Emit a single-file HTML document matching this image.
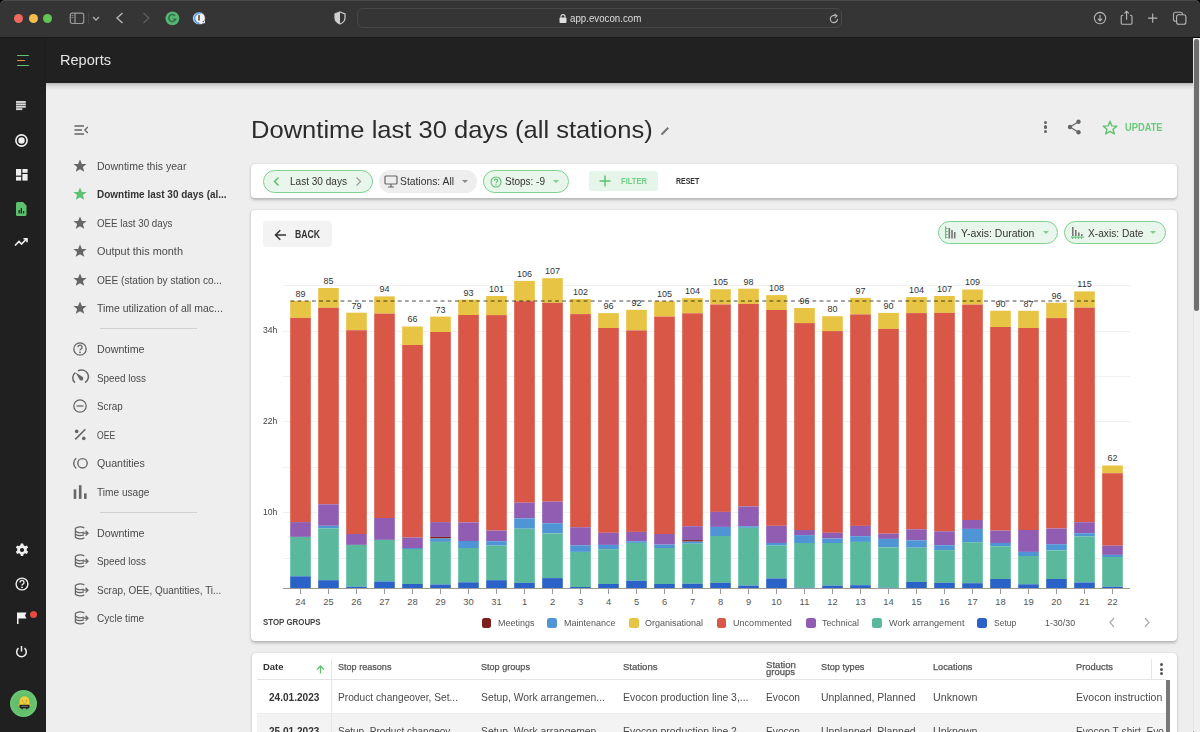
<!DOCTYPE html>
<html><head><meta charset="utf-8"><title>Reports</title>
<style>
html,body{margin:0;padding:0;}
body{width:1200px;height:732px;overflow:hidden;position:relative;background:#000;font-family:"Liberation Sans",sans-serif;}
.t{position:absolute;white-space:nowrap;}
.r{position:absolute;}
.s{position:absolute;overflow:visible;}
</style></head><body>

<div class="r" style="left:0px;top:0px;width:1200px;height:37px;background:#353535;border-radius:5px 5px 0 0;box-shadow:inset 0 1px 0 #4a4a4a;"></div>
<div class="r" style="left:14.0px;top:14px;width:9px;height:9px;border-radius:50%;background:#ee6a5f;"></div>
<div class="r" style="left:28.5px;top:14px;width:9px;height:9px;border-radius:50%;background:#f5bf4f;"></div>
<div class="r" style="left:43.0px;top:14px;width:9px;height:9px;border-radius:50%;background:#61c454;"></div>
<svg class="s" style="left:69px;top:12px;" width="16" height="12" viewBox="0 0 16 12"><rect x="1.3" y="1.1" width="13.4" height="10.4" rx="2" fill="none" stroke="#9a9a9a" stroke-width="1.2"/><line x1="6" y1="1" x2="6" y2="11" stroke="#9a9a9a" stroke-width="1.2"/><line x1="2.5" y1="3.5" x2="4.5" y2="3.5" stroke="#9a9a9a" stroke-width=".8"/><line x1="2.5" y1="5.5" x2="4.5" y2="5.5" stroke="#9a9a9a" stroke-width=".8"/></svg>
<div class="r" style="left:88px;top:13px;width:1px;height:11px;background:#444;"></div>
<svg class="s" style="left:92px;top:16px;" width="8" height="5" viewBox="0 0 8 5"><path d="M1 1 L4 4 L7 1" fill="none" stroke="#b0b0b0" stroke-width="1.3"/></svg>
<svg class="s" style="left:115px;top:12px;" width="9" height="12" viewBox="0 0 9 12"><path d="M7.5 1 L2 6 L7.5 11" fill="none" stroke="#b5b5b5" stroke-width="1.4"/></svg>
<svg class="s" style="left:141.5px;top:12px;" width="9" height="12" viewBox="0 0 9 12"><path d="M1.5 1 L6.8 6 L1.5 11" fill="none" stroke="#5e5e5e" stroke-width="1.3"/></svg>
<svg class="s" style="left:165px;top:11px;" width="15" height="15" viewBox="0 0 15 15"><circle cx="7.4" cy="7.3" r="6.9" fill="#55b673"/><path d="M10.1 4.9 A3.5 3.5 0 1 0 10.6 8.3 L8.2 8.3" fill="none" stroke="#3a6e4a" stroke-width="1.5"/></svg>
<svg class="s" style="left:191px;top:10px;" width="18" height="18" viewBox="0 0 18 18"><circle cx="8" cy="8.3" r="6.3" fill="#f4f4f4" stroke="#222" stroke-width=".6"/><path d="M10.5 3.3 A5.2 5.2 0 1 0 8.5 13.4" fill="none" stroke="#5a9ff0" stroke-width="1.6"/><rect x="7" y="4.7" width="2" height="6" rx=".8" fill="#6e6e6e"/><path d="M9.5 11 L12.3 9.6 L14 11.2 L14 13.2 L11 13.4 L10 14.6 Z" fill="#f0f0f0"/><path d="M11.2 11.8 L12.8 10.8 L13.2 12.6 Z" fill="#555"/></svg>
<svg class="s" style="left:334px;top:11px;" width="12" height="14" viewBox="0 0 12 14"><path d="M6 1 L11 3 L11 7 C11 10 8.5 12 6 13 C3.5 12 1 10 1 7 L1 3 Z" fill="none" stroke="#cfcfcf" stroke-width="1.2"/><path d="M6 1 L6 13 C3.5 12 1 10 1 7 L1 3 Z" fill="#cfcfcf"/></svg>
<div class="r" style="left:357px;top:8px;width:485px;height:20px;background:#353535;border:1px solid #484848;border-radius:6px;box-sizing:border-box;"></div>
<svg class="s" style="left:559px;top:14px;" width="8" height="9" viewBox="0 0 8 9"><rect x="0.5" y="3.5" width="7" height="5.5" rx="1" fill="#e0e0e0"/><path d="M2 3.8 V2.6 A2 2 0 0 1 6 2.6 V3.8" fill="none" stroke="#e0e0e0" stroke-width="1.1"/></svg>
<div class="t" style="left:570.00px;top:13.98px;font-size:10.3px;line-height:10.3px;color:#dedede;transform:scaleX(0.9434);transform-origin:0 0;">app.evocon.com</div>
<svg class="s" style="left:828px;top:13px;" width="12" height="12" viewBox="0 0 12 12"><path d="M9.5 6 A3.6 3.6 0 1 1 7.5 2.8" fill="none" stroke="#bbb" stroke-width="1.1"/><path d="M6.5 1 L9 2.8 L6.8 4.8" fill="none" stroke="#bbb" stroke-width="1.1"/></svg>
<svg class="s" style="left:1092px;top:10px;" width="16" height="16" viewBox="0 0 16 16"><circle cx="8" cy="8.1" r="5.7" fill="none" stroke="#b8b8b8" stroke-width="1.1"/><path d="M8 5 V10.8 M5.8 8.7 L8 10.9 L10.2 8.7" fill="none" stroke="#b8b8b8" stroke-width="1.1"/></svg>
<svg class="s" style="left:1119px;top:9px;" width="16" height="17" viewBox="0 0 16 17"><path d="M4.3 6.3 H3.6 A1.4 1.4 0 0 0 2.2 7.7 V13.9 A1.4 1.4 0 0 0 3.6 15.3 H11.6 A1.4 1.4 0 0 0 13 13.9 V7.7 A1.4 1.4 0 0 0 11.6 6.3 H10.9" fill="none" stroke="#b8b8b8" stroke-width="1.1"/><path d="M7.6 10.7 V2.3 M5.4 4.4 L7.6 2.2 L9.8 4.4" fill="none" stroke="#b8b8b8" stroke-width="1.1"/></svg>
<svg class="s" style="left:1146px;top:11px;" width="14" height="14" viewBox="0 0 14 14"><path d="M6.7 2.5 V11.7 M2.1 7.1 H11.3" stroke="#b8b8b8" stroke-width="1.1"/></svg>
<svg class="s" style="left:1172px;top:11px;" width="16" height="16" viewBox="0 0 16 16"><rect x="1.5" y="1.2" width="9" height="9" rx="2" fill="none" stroke="#b0b0b0" stroke-width="1.1"/><rect x="4.6" y="3.8" width="9.3" height="9.4" rx="2" fill="#353535" stroke="#b8b8b8" stroke-width="1.1"/></svg>
<div class="r" style="left:0px;top:37px;width:46px;height:695px;background:#202020;"></div>
<div class="r" style="left:46px;top:37px;width:1147px;height:46px;background:#212121;"></div>
<div class="r" style="left:0px;top:37px;width:1193px;height:1px;background:#1a1a1a;"></div>
<div class="r" style="left:45px;top:38px;width:1px;height:45px;background:#1d1d1d;"></div>
<div class="r" style="left:46px;top:83px;width:1147px;height:649px;background:#eeeeee;"></div>
<div class="r" style="left:46px;top:83px;width:1147px;height:7px;background:linear-gradient(rgba(0,0,0,.22),rgba(0,0,0,.08) 45%,rgba(0,0,0,0));"></div>
<div class="r" style="left:1193px;top:38px;width:7px;height:694px;background:#efefef;box-shadow:inset 1px 0 0 #e2e2e2;"></div>
<div class="r" style="left:1194px;top:38.5px;width:5px;height:272.5px;background:#6e6e6e;border-radius:2.5px;"></div>
<div class="r" style="left:17px;top:54.8px;width:11.5px;height:1.6px;background:#5cc26f;border-radius:1px;"></div>
<div class="r" style="left:17px;top:59.7px;width:7.8px;height:1.6px;background:#e8913c;border-radius:1px;"></div>
<div class="r" style="left:17px;top:64.7px;width:11.5px;height:1.6px;background:#5cc26f;border-radius:1px;"></div>
<div class="t" style="left:60.00px;top:52.28px;font-size:15.5px;line-height:15.5px;color:#e6e6e6;transform:scaleX(0.9397);transform-origin:0 0;">Reports</div>
<svg class="s" style="left:16.4px;top:101px;" width="10" height="9" viewBox="0 0 10 9"><rect x="0" y="0" width="9.8" height="1.9" fill="#d8d8d8"/><rect x="0" y="2.4" width="9.8" height="1.9" fill="#d8d8d8"/><rect x="0" y="4.8" width="9.8" height="1.9" fill="#d8d8d8"/><rect x="0" y="7.2" width="6.3" height="1.9" fill="#d8d8d8"/></svg>
<svg class="s" style="left:14px;top:133px;" width="15" height="15" viewBox="0 0 15 15"><circle cx="7.5" cy="7.5" r="5.6" fill="none" stroke="#f0f0f0" stroke-width="1.6"/><circle cx="7.5" cy="7.5" r="3.2" fill="#f0f0f0"/></svg>
<svg class="s" style="left:15.5px;top:168.5px;" width="12" height="12" viewBox="0 0 12 12"><rect x="0" y="0" width="5.2" height="6.6" fill="#efefef"/><rect x="6.4" y="0" width="5.2" height="3.8" fill="#efefef"/><rect x="0" y="7.8" width="5.2" height="3.8" fill="#efefef"/><rect x="6.4" y="5" width="5.2" height="6.6" fill="#efefef"/></svg>
<svg class="s" style="left:16px;top:202px;" width="11" height="14" viewBox="0 0 11 14"><path d="M1.5 0 H7 L10.5 3.5 V12.5 A1.5 1.5 0 0 1 9 14 H1.5 A1.5 1.5 0 0 1 0 12.5 V1.5 A1.5 1.5 0 0 1 1.5 0 Z" fill="#5cc26f"/><rect x="2.5" y="8" width="1.3" height="3.5" fill="#1f1f1f"/><rect x="4.7" y="6" width="1.3" height="5.5" fill="#1f1f1f"/><rect x="6.9" y="9" width="1.3" height="2.5" fill="#1f1f1f"/></svg>
<svg class="s" style="left:14px;top:237px;" width="15" height="10" viewBox="0 0 15 10"><path d="M1 8.5 L5 4.5 L7.5 7 L12.5 2 M9.5 1.8 H13 V5.3" fill="none" stroke="#efefef" stroke-width="1.6"/></svg>
<svg class="s" style="left:14.5px;top:542.5px;" width="14" height="14" viewBox="0 0 14 14"><g transform="translate(7 7)"><path d="M-1.2 -6.5 h2.4 l.4 1.8 l1.6 .9 l1.7 -.7 l1.2 2.1 l-1.4 1.2 v1.8 l1.4 1.2 l-1.2 2.1 l-1.7 -.7 l-1.6 .9 l-.4 1.8 h-2.4 l-.4 -1.8 l-1.6 -.9 l-1.7 .7 l-1.2 -2.1 l1.4 -1.2 v-1.8 l-1.4 -1.2 l1.2 -2.1 l1.7 .7 l1.6 -.9 z" fill="#f0f0f0"/><circle r="2.1" fill="#1f1f1f"/></g></svg>
<svg class="s" style="left:14.5px;top:577px;" width="14" height="14" viewBox="0 0 14 14"><circle cx="7" cy="7" r="5.9" fill="none" stroke="#f0f0f0" stroke-width="1.4"/><path d="M5 5.4 A2 2 0 1 1 7.6 7.3 C7.1 7.6 7 8 7 8.6" fill="none" stroke="#f0f0f0" stroke-width="1.4"/><circle cx="7" cy="10.3" r=".9" fill="#f0f0f0"/></svg>
<svg class="s" style="left:16px;top:611px;" width="12" height="14" viewBox="0 0 12 14"><path d="M1 1.5 H10.5 L9 4.5 L10.5 7.5 H2.5 V13 H1 Z" fill="#f2f2f2"/></svg>
<div class="r" style="left:29.5px;top:610.5px;width:7px;height:7px;border-radius:50%;background:#e5493f;"></div>
<svg class="s" style="left:15px;top:645px;" width="13" height="13" viewBox="0 0 13 13"><path d="M6.5 1 V6.5" stroke="#f0f0f0" stroke-width="1.5"/><path d="M3.5 3.2 A4.8 4.8 0 1 0 9.5 3.2" fill="none" stroke="#f0f0f0" stroke-width="1.5"/></svg>
<div class="r" style="left:10px;top:690px;width:27px;height:27px;border-radius:50%;background:radial-gradient(circle,#5fb768 0,#66c26f 60%,#72d888 85%,#5aa866 100%);filter:blur(.7px);"></div>
<svg class="s" style="left:13.5px;top:693px;" width="21" height="21" viewBox="0 0 21 21"><path d="M5.6 10.5 V8.2 A4.9 4.9 0 0 1 15.4 8.2 V10.5 Z" fill="#f0cf3e"/><rect x="5.6" y="9.5" width="9.8" height="2.5" fill="#f0cf3e"/><rect x="5.6" y="11.7" width="9.8" height="3.6" rx=".8" fill="#222"/><rect x="7.2" y="12.9" width="6.6" height=".9" fill="#777"/><rect x="7.4" y="15" width="1.6" height="1.2" fill="#222"/><rect x="12" y="15" width="1.6" height="1.2" fill="#222"/><circle cx="8.4" cy="7.6" r=".6" fill="#a88a20"/><circle cx="12.6" cy="7.6" r=".6" fill="#a88a20"/><path d="M8.6 9.3 L10.5 10.4 L12.4 9.3" fill="none" stroke="#a88a20" stroke-width=".6"/><circle cx="4.4" cy="12.2" r=".8" fill="#d8c040"/><circle cx="16.6" cy="12.2" r=".8" fill="#d8c040"/></svg>
<svg class="s" style="left:74px;top:125px;" width="15" height="10" viewBox="0 0 15 10"><path d="M0.5 1 H10 M0.5 5 H8 M0.5 9 H10" stroke="#666" stroke-width="1.3"/><path d="M13.8 2 L10.8 5 L13.8 8" fill="none" stroke="#666" stroke-width="1.3"/></svg>
<svg class="s" style="left:73px;top:158.5px;" width="14" height="13" viewBox="0 0 14 13"><path d="M7 0.4 L8.9 5 L13.6 5.1 L9.9 8.1 L11.2 12.8 L7 10.2 L2.8 12.8 L4.1 8.1 L0.4 5.1 L5.1 5 Z" fill="#666"/></svg>
<div class="t" style="left:97.40px;top:160.53px;font-size:10.6px;line-height:10.6px;color:#4a4a4a;transform:scaleX(0.9930);transform-origin:0 0;">Downtime this year</div>
<svg class="s" style="left:73px;top:187.0px;" width="14" height="13" viewBox="0 0 14 13"><path d="M7 0.4 L8.9 5 L13.6 5.1 L9.9 8.1 L11.2 12.8 L7 10.2 L2.8 12.8 L4.1 8.1 L0.4 5.1 L5.1 5 Z" fill="#5cc26f"/></svg>
<div class="t" style="left:97.40px;top:189.03px;font-size:10.6px;line-height:10.6px;color:#333;font-weight:700;transform:scaleX(0.9409);transform-origin:0 0;">Downtime last 30 days (al...</div>
<svg class="s" style="left:73px;top:215.5px;" width="14" height="13" viewBox="0 0 14 13"><path d="M7 0.4 L8.9 5 L13.6 5.1 L9.9 8.1 L11.2 12.8 L7 10.2 L2.8 12.8 L4.1 8.1 L0.4 5.1 L5.1 5 Z" fill="#666"/></svg>
<div class="t" style="left:97.40px;top:217.53px;font-size:10.6px;line-height:10.6px;color:#4a4a4a;transform:scaleX(0.9219);transform-origin:0 0;">OEE last 30 days</div>
<svg class="s" style="left:73px;top:244.0px;" width="14" height="13" viewBox="0 0 14 13"><path d="M7 0.4 L8.9 5 L13.6 5.1 L9.9 8.1 L11.2 12.8 L7 10.2 L2.8 12.8 L4.1 8.1 L0.4 5.1 L5.1 5 Z" fill="#666"/></svg>
<div class="t" style="left:97.40px;top:246.03px;font-size:10.6px;line-height:10.6px;color:#4a4a4a;transform:scaleX(1.0279);transform-origin:0 0;">Output this month</div>
<svg class="s" style="left:73px;top:272.6px;" width="14" height="13" viewBox="0 0 14 13"><path d="M7 0.4 L8.9 5 L13.6 5.1 L9.9 8.1 L11.2 12.8 L7 10.2 L2.8 12.8 L4.1 8.1 L0.4 5.1 L5.1 5 Z" fill="#666"/></svg>
<div class="t" style="left:97.40px;top:274.63px;font-size:10.6px;line-height:10.6px;color:#4a4a4a;transform:scaleX(0.9514);transform-origin:0 0;">OEE (station by station co...</div>
<svg class="s" style="left:73px;top:301.0px;" width="14" height="13" viewBox="0 0 14 13"><path d="M7 0.4 L8.9 5 L13.6 5.1 L9.9 8.1 L11.2 12.8 L7 10.2 L2.8 12.8 L4.1 8.1 L0.4 5.1 L5.1 5 Z" fill="#666"/></svg>
<div class="t" style="left:97.40px;top:303.03px;font-size:10.6px;line-height:10.6px;color:#4a4a4a;transform:scaleX(0.9879);transform-origin:0 0;">Time utilization of all mac...</div>
<div class="r" style="left:100px;top:328px;width:97px;height:1px;background:#cfcfcf;"></div>
<svg class="s" style="left:71.7px;top:340.70000000000005px;" width="16" height="16" viewBox="0 0 16 16"><circle cx="8" cy="8" r="6.2" fill="none" stroke="#666" stroke-width="1.3"/><path d="M6 6.3 A2.05 2.05 0 1 1 8.7 8.2 C8.2 8.5 8 8.9 8 9.6" fill="none" stroke="#666" stroke-width="1.3"/><circle cx="8" cy="11.3" r=".85" fill="#666"/></svg>
<div class="t" style="left:97.40px;top:344.13px;font-size:10.6px;line-height:10.6px;color:#4a4a4a;transform:scaleX(1.0101);transform-origin:0 0;">Downtime</div>
<svg class="s" style="left:71.7px;top:369.1px;" width="16" height="16" viewBox="0 0 16 16"><path d="M2.9 13.6 A6.4 6.4 0 0 1 3.4 3.6 M6 1.9 A6.4 6.4 0 0 1 13.1 13.6" fill="none" stroke="#666" stroke-width="1.5"/><path d="M3.6 3.4 L9.9 7.6 A2 2 0 1 1 7.4 10.2 Z" fill="#666"/></svg>
<div class="t" style="left:97.40px;top:372.53px;font-size:10.6px;line-height:10.6px;color:#4a4a4a;transform:scaleX(0.9343);transform-origin:0 0;">Speed loss</div>
<svg class="s" style="left:71.7px;top:397.8px;" width="16" height="16" viewBox="0 0 16 16"><circle cx="8" cy="8" r="6.2" fill="none" stroke="#666" stroke-width="1.3"/><path d="M4.6 8 H11.4" stroke="#666" stroke-width="1.3"/></svg>
<div class="t" style="left:97.40px;top:401.23px;font-size:10.6px;line-height:10.6px;color:#4a4a4a;transform:scaleX(0.9245);transform-origin:0 0;">Scrap</div>
<svg class="s" style="left:71.7px;top:426.3px;" width="16" height="16" viewBox="0 0 16 16"><circle cx="4.7" cy="5.4" r="1.8" fill="#666"/><circle cx="11.8" cy="12.4" r="1.8" fill="#666"/><path d="M3.2 13.4 L13.4 3.3" stroke="#666" stroke-width="1.6"/></svg>
<div class="t" style="left:97.40px;top:429.73px;font-size:10.6px;line-height:10.6px;color:#4a4a4a;transform:scaleX(0.8086);transform-origin:0 0;">OEE</div>
<svg class="s" style="left:71.7px;top:454.8px;" width="16" height="16" viewBox="0 0 16 16"><circle cx="10.5" cy="8.3" r="4.7" fill="none" stroke="#666" stroke-width="1.4"/><path d="M4.2 3.2 A6.4 6.4 0 0 0 4.2 13.4" fill="none" stroke="#666" stroke-width="1.4"/></svg>
<div class="t" style="left:97.40px;top:458.23px;font-size:10.6px;line-height:10.6px;color:#4a4a4a;transform:scaleX(1.0016);transform-origin:0 0;">Quantities</div>
<svg class="s" style="left:71.7px;top:483.3px;" width="16" height="16" viewBox="0 0 16 16"><rect x="1.7" y="6.4" width="2.6" height="9.5" fill="#666"/><rect x="6.9" y="2.2" width="2.6" height="13.7" fill="#666"/><rect x="12" y="10.4" width="2.6" height="5.5" fill="#666"/></svg>
<div class="t" style="left:97.40px;top:486.73px;font-size:10.6px;line-height:10.6px;color:#4a4a4a;transform:scaleX(0.9548);transform-origin:0 0;">Time usage</div>
<div class="r" style="left:100px;top:512px;width:97px;height:1px;background:#cfcfcf;"></div>
<svg class="s" style="left:74px;top:525.6px;" width="16" height="14" viewBox="0 0 16 14"><path d="M10.3 1.9 C8.3 0.4 3.5 0.4 1.4 2.4 V11.2 C3.5 13.3 8.3 13.3 10.3 11.8" fill="none" stroke="#666" stroke-width="1.25"/><path d="M1.6 5.3 C3.5 6.8 7.5 6.9 10 6 M1.6 8.2 C3.5 9.7 7.5 9.8 10 8.9" fill="none" stroke="#666" stroke-width="1.2"/><path d="M8.3 7.2 H13.8 M11.6 4.8 L14 7.2 L11.6 9.6" fill="none" stroke="#666" stroke-width="1.25"/></svg>
<div class="t" style="left:97.40px;top:527.63px;font-size:10.6px;line-height:10.6px;color:#4a4a4a;transform:scaleX(1.0101);transform-origin:0 0;">Downtime</div>
<svg class="s" style="left:74px;top:554.1px;" width="16" height="14" viewBox="0 0 16 14"><path d="M10.3 1.9 C8.3 0.4 3.5 0.4 1.4 2.4 V11.2 C3.5 13.3 8.3 13.3 10.3 11.8" fill="none" stroke="#666" stroke-width="1.25"/><path d="M1.6 5.3 C3.5 6.8 7.5 6.9 10 6 M1.6 8.2 C3.5 9.7 7.5 9.8 10 8.9" fill="none" stroke="#666" stroke-width="1.2"/><path d="M8.3 7.2 H13.8 M11.6 4.8 L14 7.2 L11.6 9.6" fill="none" stroke="#666" stroke-width="1.25"/></svg>
<div class="t" style="left:97.40px;top:556.13px;font-size:10.6px;line-height:10.6px;color:#4a4a4a;transform:scaleX(0.9343);transform-origin:0 0;">Speed loss</div>
<svg class="s" style="left:74px;top:582.7px;" width="16" height="14" viewBox="0 0 16 14"><path d="M10.3 1.9 C8.3 0.4 3.5 0.4 1.4 2.4 V11.2 C3.5 13.3 8.3 13.3 10.3 11.8" fill="none" stroke="#666" stroke-width="1.25"/><path d="M1.6 5.3 C3.5 6.8 7.5 6.9 10 6 M1.6 8.2 C3.5 9.7 7.5 9.8 10 8.9" fill="none" stroke="#666" stroke-width="1.2"/><path d="M8.3 7.2 H13.8 M11.6 4.8 L14 7.2 L11.6 9.6" fill="none" stroke="#666" stroke-width="1.25"/></svg>
<div class="t" style="left:97.40px;top:584.73px;font-size:10.6px;line-height:10.6px;color:#4a4a4a;transform:scaleX(0.9385);transform-origin:0 0;">Scrap, OEE, Quantities, Ti...</div>
<svg class="s" style="left:74px;top:611.2px;" width="16" height="14" viewBox="0 0 16 14"><path d="M10.3 1.9 C8.3 0.4 3.5 0.4 1.4 2.4 V11.2 C3.5 13.3 8.3 13.3 10.3 11.8" fill="none" stroke="#666" stroke-width="1.25"/><path d="M1.6 5.3 C3.5 6.8 7.5 6.9 10 6 M1.6 8.2 C3.5 9.7 7.5 9.8 10 8.9" fill="none" stroke="#666" stroke-width="1.2"/><path d="M8.3 7.2 H13.8 M11.6 4.8 L14 7.2 L11.6 9.6" fill="none" stroke="#666" stroke-width="1.25"/></svg>
<div class="t" style="left:97.40px;top:613.23px;font-size:10.6px;line-height:10.6px;color:#4a4a4a;transform:scaleX(0.9540);transform-origin:0 0;">Cycle time</div>
<div class="t" style="left:251.10px;top:117.78px;font-size:24.6px;line-height:24.6px;color:#2b2b2b;transform:scaleX(1.0384);transform-origin:0 0;">Downtime last 30 days (all stations)</div>
<svg class="s" style="left:660px;top:126px;" width="10" height="10" viewBox="0 0 10 10"><path d="M1 9 L1.3 7.2 L7.5 1 L9 2.5 L2.8 8.7 Z" fill="#777"/></svg>
<div class="r" style="left:1044.0px;top:121.0px;width:3.2px;height:3.2px;border-radius:50%;background:#666;"></div>
<div class="r" style="left:1044.0px;top:125.4px;width:3.2px;height:3.2px;border-radius:50%;background:#666;"></div>
<div class="r" style="left:1044.0px;top:129.70000000000002px;width:3.2px;height:3.2px;border-radius:50%;background:#666;"></div>
<svg class="s" style="left:1067px;top:119px;" width="15" height="16" viewBox="0 0 15 16"><circle cx="11.5" cy="2.8" r="2.2" fill="#666"/><circle cx="3" cy="8" r="2.2" fill="#666"/><circle cx="11.5" cy="13.2" r="2.2" fill="#666"/><path d="M11.5 2.8 L3 8 L11.5 13.2" fill="none" stroke="#666" stroke-width="1.2"/></svg>
<svg class="s" style="left:1102px;top:119.5px;" width="16" height="15" viewBox="0 0 16 15"><path d="M8 1.2 L9.9 5.9 L14.8 6.1 L11 9.2 L12.3 14 L8 11.3 L3.7 14 L5 9.2 L1.2 6.1 L6.1 5.9 Z" fill="none" stroke="#5cc26f" stroke-width="1.4" stroke-linejoin="round"/></svg>
<div class="t" style="left:1124.60px;top:121.77px;font-size:10.9px;line-height:10.9px;color:#6acb7e;font-weight:700;transform:scaleX(0.8545);transform-origin:0 0;">UPDATE</div>
<div class="r" style="left:251px;top:164px;width:926px;height:34.2px;background:#fff;border-radius:4px;box-shadow:0 1.5px 3px rgba(0,0,0,.24),0 0 1px rgba(0,0,0,.1);"></div>
<div class="r" style="left:263px;top:170px;width:109.6px;height:22.6px;background:#e9f6eb;border:1px solid #7fd08f;border-radius:12px;box-sizing:border-box;"></div>
<svg class="s" style="left:273px;top:176px;" width="7" height="11" viewBox="0 0 7 11"><path d="M5.5 1.5 L1.5 5.5 L5.5 9.5" fill="none" stroke="#5cc26f" stroke-width="1.5"/></svg>
<div class="t" style="left:289.50px;top:176.33px;font-size:10.6px;line-height:10.6px;color:#333;transform:scaleX(0.9483);transform-origin:0 0;">Last 30 days</div>
<svg class="s" style="left:355px;top:176px;" width="7" height="11" viewBox="0 0 7 11"><path d="M1.5 1.5 L5.5 5.5 L1.5 9.5" fill="none" stroke="#999" stroke-width="1.2"/></svg>
<div class="r" style="left:378.6px;top:170px;width:98px;height:22.6px;background:#eeeeee;border-radius:12px;"></div>
<svg class="s" style="left:384px;top:175px;" width="14" height="13" viewBox="0 0 14 13"><rect x="1" y="1" width="12" height="8" rx="1" fill="none" stroke="#666" stroke-width="1.2"/><path d="M7 9 V11.5 M4 12 H10" stroke="#666" stroke-width="1.2"/></svg>
<div class="t" style="left:400.00px;top:176.33px;font-size:10.6px;line-height:10.6px;color:#333;transform:scaleX(0.9750);transform-origin:0 0;">Stations: All</div>
<svg class="s" style="left:462px;top:180px;" width="6" height="4" viewBox="0 0 6 4"><path d="M0 0 H6 L3 3 Z" fill="#888"/></svg>
<div class="r" style="left:483px;top:170px;width:85.6px;height:22.6px;background:#e9f6eb;border:1px solid #7fd08f;border-radius:12px;box-sizing:border-box;"></div>
<svg class="s" style="left:489.5px;top:175.5px;" width="12" height="12" viewBox="0 0 12 12"><circle cx="6" cy="6" r="5" fill="none" stroke="#5cc26f" stroke-width="1.1"/><path d="M4.4 4.7 A1.6 1.6 0 1 1 6.5 6.2 C6.1 6.5 6 6.8 6 7.3" fill="none" stroke="#5cc26f" stroke-width="1.1"/><circle cx="6" cy="8.9" r=".7" fill="#5cc26f"/></svg>
<div class="t" style="left:505.00px;top:176.33px;font-size:10.6px;line-height:10.6px;color:#333;transform:scaleX(0.9429);transform-origin:0 0;">Stops: -9</div>
<svg class="s" style="left:553px;top:180px;" width="6" height="4" viewBox="0 0 6 4"><path d="M0 0 H6 L3 3 Z" fill="#7fcf8f"/></svg>
<div class="r" style="left:589px;top:171.4px;width:69.4px;height:19.6px;background:#e6f5e9;border-radius:3px;"></div>
<svg class="s" style="left:599px;top:175px;" width="12" height="12" viewBox="0 0 12 12"><path d="M6 0.5 V11.5 M0.5 6 H11.5" stroke="#5cc26f" stroke-width="1.5"/></svg>
<div class="t" style="left:620.50px;top:177.14px;font-size:8.7px;line-height:8.7px;color:#6fcf84;font-weight:700;transform:scaleX(0.8725);transform-origin:0 0;">FILTER</div>
<div class="t" style="left:676.00px;top:177.14px;font-size:8.7px;line-height:8.7px;color:#333;font-weight:700;transform:scaleX(0.8033);transform-origin:0 0;">RESET</div>
<div class="r" style="left:251px;top:210px;width:926px;height:431px;background:#fff;border-radius:4px;box-shadow:0 1.5px 3px rgba(0,0,0,.24),0 0 1px rgba(0,0,0,.1);"></div>
<div class="r" style="left:263px;top:221.2px;width:68.8px;height:25.6px;background:#f3f3f3;border-radius:4px;"></div>
<svg class="s" style="left:274px;top:228.5px;" width="13" height="12" viewBox="0 0 13 12"><path d="M12 6 H1.8 M6.3 1.3 L1.5 6 L6.3 10.7" fill="none" stroke="#333" stroke-width="1.5"/></svg>
<div class="t" style="left:294.70px;top:229.73px;font-size:10px;line-height:10px;color:#333;font-weight:700;transform:scaleX(0.8689);transform-origin:0 0;">BACK</div>
<div class="r" style="left:937.9px;top:221.3px;width:120.6px;height:22.5px;background:#e9f6eb;border:1px solid #7fd08f;border-radius:12px;box-sizing:border-box;"></div>
<svg class="s" style="left:945px;top:226px;" width="13" height="13" viewBox="0 0 13 13"><rect x="0" y="0.5" width="1.2" height="12" fill="#5cc26f"/><rect x="1.2" y="2" width="1.5" height="1" fill="#5cc26f"/><rect x="1.2" y="5" width="1.5" height="1" fill="#5cc26f"/><rect x="1.2" y="8" width="1.5" height="1" fill="#5cc26f"/><rect x="1.2" y="11" width="1.5" height="1" fill="#5cc26f"/><rect x="3.5" y="2" width="1.6" height="10.5" fill="#777"/><rect x="6.2" y="4" width="1.6" height="8.5" fill="#777"/><rect x="8.9" y="6" width="1.6" height="6.5" fill="#777"/></svg>
<div class="t" style="left:961.00px;top:227.73px;font-size:10.6px;line-height:10.6px;color:#333;transform:scaleX(0.9861);transform-origin:0 0;">Y-axis: Duration</div>
<svg class="s" style="left:1043px;top:231px;" width="6" height="4" viewBox="0 0 6 4"><path d="M0 0 H6 L3 3 Z" fill="#7fcf8f"/></svg>
<div class="r" style="left:1064.4px;top:221.3px;width:101.4px;height:22.5px;background:#e9f6eb;border:1px solid #7fd08f;border-radius:12px;box-sizing:border-box;"></div>
<svg class="s" style="left:1071px;top:226px;" width="14" height="13" viewBox="0 0 14 13"><rect x="1" y="1" width="1.6" height="9" fill="#777"/><rect x="4" y="4" width="1.6" height="6" fill="#777"/><rect x="7" y="6.5" width="1.6" height="3.5" fill="#777"/><rect x="10" y="8" width="1.6" height="2" fill="#777"/><rect x="0" y="10.5" width="13" height="1.2" fill="#5cc26f"/><rect x="1" y="11.5" width="1" height="1.5" fill="#5cc26f"/><rect x="4" y="11.5" width="1" height="1.5" fill="#5cc26f"/><rect x="7" y="11.5" width="1" height="1.5" fill="#5cc26f"/><rect x="10" y="11.5" width="1" height="1.5" fill="#5cc26f"/></svg>
<div class="t" style="left:1087.50px;top:227.73px;font-size:10.6px;line-height:10.6px;color:#333;transform:scaleX(0.9614);transform-origin:0 0;">X-axis: Date</div>
<svg class="s" style="left:1150px;top:231px;" width="6" height="4" viewBox="0 0 6 4"><path d="M0 0 H6 L3 3 Z" fill="#7fcf8f"/></svg>
<div class="r" style="left:283px;top:285.3px;width:847px;height:1px;background:#f1f1f1;"></div>
<div class="r" style="left:283px;top:330.6px;width:847px;height:1px;background:#f1f1f1;"></div>
<div class="r" style="left:283px;top:375.9px;width:847px;height:1px;background:#f1f1f1;"></div>
<div class="r" style="left:283px;top:421.3px;width:847px;height:1px;background:#f1f1f1;"></div>
<div class="r" style="left:283px;top:466.8px;width:847px;height:1px;background:#f1f1f1;"></div>
<div class="r" style="left:283px;top:512.3px;width:847px;height:1px;background:#f1f1f1;"></div>
<div class="r" style="left:283px;top:557.9px;width:847px;height:1px;background:#f1f1f1;"></div>
<div class="t" style="left:263.00px;top:326.28px;font-size:9px;line-height:9px;color:#444;transform:scaleX(0.9523);transform-origin:0 0;">34h</div>
<div class="t" style="left:263.00px;top:416.98px;font-size:9px;line-height:9px;color:#444;transform:scaleX(0.9523);transform-origin:0 0;">22h</div>
<div class="t" style="left:263.00px;top:507.98px;font-size:9px;line-height:9px;color:#444;transform:scaleX(0.9523);transform-origin:0 0;">10h</div>
<svg class="s" style="left:0;top:0" width="1200" height="732" viewBox="0 0 1200 732"><rect x="290.20" y="300.90" width="20.6" height="17.00" fill="#e8c444"/><rect x="290.20" y="317.90" width="20.6" height="204.20" fill="#d95746"/><rect x="290.20" y="522.10" width="20.6" height="14.80" fill="#905db3"/><rect x="290.20" y="536.90" width="20.6" height="39.40" fill="#5ab99d"/><rect x="290.20" y="576.30" width="20.6" height="11.90" fill="#2b62c8"/><rect x="318.20" y="288.00" width="20.6" height="19.80" fill="#e8c444"/><rect x="318.20" y="307.80" width="20.6" height="196.50" fill="#d95746"/><rect x="318.20" y="504.30" width="20.6" height="21.50" fill="#905db3"/><rect x="318.20" y="525.80" width="20.6" height="2.50" fill="#4f95d5"/><rect x="318.20" y="528.30" width="20.6" height="51.90" fill="#5ab99d"/><rect x="318.20" y="580.20" width="20.6" height="8.00" fill="#2b62c8"/><rect x="346.20" y="312.70" width="20.6" height="17.50" fill="#e8c444"/><rect x="346.20" y="330.20" width="20.6" height="203.80" fill="#d95746"/><rect x="346.20" y="534.00" width="20.6" height="10.90" fill="#905db3"/><rect x="346.20" y="544.90" width="20.6" height="41.80" fill="#5ab99d"/><rect x="346.20" y="586.70" width="20.6" height="1.50" fill="#2b62c8"/><rect x="374.20" y="296.40" width="20.6" height="17.20" fill="#e8c444"/><rect x="374.20" y="313.60" width="20.6" height="204.40" fill="#d95746"/><rect x="374.20" y="518.00" width="20.6" height="21.90" fill="#905db3"/><rect x="374.20" y="539.90" width="20.6" height="41.60" fill="#5ab99d"/><rect x="374.20" y="581.50" width="20.6" height="6.70" fill="#2b62c8"/><rect x="402.20" y="326.50" width="20.6" height="18.50" fill="#e8c444"/><rect x="402.20" y="345.00" width="20.6" height="192.50" fill="#d95746"/><rect x="402.20" y="537.50" width="20.6" height="10.50" fill="#905db3"/><rect x="402.20" y="548.00" width="20.6" height="1.00" fill="#4f95d5"/><rect x="402.20" y="549.00" width="20.6" height="35.00" fill="#5ab99d"/><rect x="402.20" y="584.00" width="20.6" height="4.20" fill="#2b62c8"/><rect x="430.20" y="316.60" width="20.6" height="15.40" fill="#e8c444"/><rect x="430.20" y="332.00" width="20.6" height="190.10" fill="#d95746"/><rect x="430.20" y="522.10" width="20.6" height="14.80" fill="#905db3"/><rect x="430.20" y="536.90" width="20.6" height="1.60" fill="#7b1f1f"/><rect x="430.20" y="538.50" width="20.6" height="3.40" fill="#4f95d5"/><rect x="430.20" y="541.90" width="20.6" height="42.60" fill="#5ab99d"/><rect x="430.20" y="584.50" width="20.6" height="3.70" fill="#2b62c8"/><rect x="458.20" y="299.70" width="20.6" height="15.30" fill="#e8c444"/><rect x="458.20" y="315.00" width="20.6" height="207.40" fill="#d95746"/><rect x="458.20" y="522.40" width="20.6" height="18.60" fill="#905db3"/><rect x="458.20" y="541.00" width="20.6" height="7.00" fill="#4f95d5"/><rect x="458.20" y="548.00" width="20.6" height="34.30" fill="#5ab99d"/><rect x="458.20" y="582.30" width="20.6" height="5.90" fill="#2b62c8"/><rect x="486.20" y="296.00" width="20.6" height="19.10" fill="#e8c444"/><rect x="486.20" y="315.10" width="20.6" height="215.50" fill="#d95746"/><rect x="486.20" y="530.60" width="20.6" height="10.60" fill="#905db3"/><rect x="486.20" y="541.20" width="20.6" height="4.40" fill="#4f95d5"/><rect x="486.20" y="545.60" width="20.6" height="34.60" fill="#5ab99d"/><rect x="486.20" y="580.20" width="20.6" height="8.00" fill="#2b62c8"/><rect x="514.20" y="280.90" width="20.6" height="20.30" fill="#e8c444"/><rect x="514.20" y="301.20" width="20.6" height="201.50" fill="#d95746"/><rect x="514.20" y="502.70" width="20.6" height="15.70" fill="#905db3"/><rect x="514.20" y="518.40" width="20.6" height="10.30" fill="#4f95d5"/><rect x="514.20" y="528.70" width="20.6" height="54.20" fill="#5ab99d"/><rect x="514.20" y="582.90" width="20.6" height="5.30" fill="#2b62c8"/><rect x="542.20" y="278.20" width="20.6" height="24.60" fill="#e8c444"/><rect x="542.20" y="302.80" width="20.6" height="198.80" fill="#d95746"/><rect x="542.20" y="501.60" width="20.6" height="21.60" fill="#905db3"/><rect x="542.20" y="523.20" width="20.6" height="10.20" fill="#4f95d5"/><rect x="542.20" y="533.40" width="20.6" height="44.70" fill="#5ab99d"/><rect x="542.20" y="578.10" width="20.6" height="10.10" fill="#2b62c8"/><rect x="570.20" y="299.10" width="20.6" height="15.00" fill="#e8c444"/><rect x="570.20" y="314.10" width="20.6" height="213.10" fill="#d95746"/><rect x="570.20" y="527.20" width="20.6" height="18.10" fill="#905db3"/><rect x="570.20" y="545.30" width="20.6" height="6.60" fill="#4f95d5"/><rect x="570.20" y="551.90" width="20.6" height="35.10" fill="#5ab99d"/><rect x="570.20" y="587.00" width="20.6" height="1.20" fill="#2b62c8"/><rect x="598.20" y="313.10" width="20.6" height="14.90" fill="#e8c444"/><rect x="598.20" y="328.00" width="20.6" height="204.80" fill="#d95746"/><rect x="598.20" y="532.80" width="20.6" height="12.10" fill="#905db3"/><rect x="598.20" y="544.90" width="20.6" height="4.30" fill="#4f95d5"/><rect x="598.20" y="549.20" width="20.6" height="34.80" fill="#5ab99d"/><rect x="598.20" y="584.00" width="20.6" height="4.20" fill="#2b62c8"/><rect x="626.20" y="309.80" width="20.6" height="20.60" fill="#e8c444"/><rect x="626.20" y="330.40" width="20.6" height="201.50" fill="#d95746"/><rect x="626.20" y="531.90" width="20.6" height="9.30" fill="#905db3"/><rect x="626.20" y="541.20" width="20.6" height="1.70" fill="#4f95d5"/><rect x="626.20" y="542.90" width="20.6" height="37.90" fill="#5ab99d"/><rect x="626.20" y="580.80" width="20.6" height="7.40" fill="#2b62c8"/><rect x="654.20" y="301.20" width="20.6" height="15.40" fill="#e8c444"/><rect x="654.20" y="316.60" width="20.6" height="217.40" fill="#d95746"/><rect x="654.20" y="534.00" width="20.6" height="10.60" fill="#905db3"/><rect x="654.20" y="544.60" width="20.6" height="3.40" fill="#4f95d5"/><rect x="654.20" y="548.00" width="20.6" height="36.00" fill="#5ab99d"/><rect x="654.20" y="584.00" width="20.6" height="4.20" fill="#2b62c8"/><rect x="682.20" y="298.10" width="20.6" height="15.20" fill="#e8c444"/><rect x="682.20" y="313.30" width="20.6" height="212.90" fill="#d95746"/><rect x="682.20" y="526.20" width="20.6" height="13.90" fill="#905db3"/><rect x="682.20" y="540.10" width="20.6" height="1.50" fill="#7b1f1f"/><rect x="682.20" y="541.60" width="20.6" height="2.10" fill="#4f95d5"/><rect x="682.20" y="543.70" width="20.6" height="40.00" fill="#5ab99d"/><rect x="682.20" y="583.70" width="20.6" height="4.50" fill="#2b62c8"/><rect x="710.20" y="289.20" width="20.6" height="15.30" fill="#e8c444"/><rect x="710.20" y="304.50" width="20.6" height="207.40" fill="#d95746"/><rect x="710.20" y="511.90" width="20.6" height="15.00" fill="#905db3"/><rect x="710.20" y="526.90" width="20.6" height="9.10" fill="#4f95d5"/><rect x="710.20" y="536.00" width="20.6" height="46.90" fill="#5ab99d"/><rect x="710.20" y="582.90" width="20.6" height="5.30" fill="#2b62c8"/><rect x="738.20" y="288.70" width="20.6" height="15.20" fill="#e8c444"/><rect x="738.20" y="303.90" width="20.6" height="202.50" fill="#d95746"/><rect x="738.20" y="506.40" width="20.6" height="19.80" fill="#905db3"/><rect x="738.20" y="526.20" width="20.6" height="1.60" fill="#4f95d5"/><rect x="738.20" y="527.80" width="20.6" height="57.80" fill="#5ab99d"/><rect x="738.20" y="585.60" width="20.6" height="2.60" fill="#2b62c8"/><rect x="766.20" y="295.10" width="20.6" height="14.90" fill="#e8c444"/><rect x="766.20" y="310.00" width="20.6" height="215.80" fill="#d95746"/><rect x="766.20" y="525.80" width="20.6" height="17.20" fill="#905db3"/><rect x="766.20" y="543.00" width="20.6" height="2.60" fill="#4f95d5"/><rect x="766.20" y="545.60" width="20.6" height="32.90" fill="#5ab99d"/><rect x="766.20" y="578.50" width="20.6" height="9.70" fill="#2b62c8"/><rect x="794.20" y="308.00" width="20.6" height="15.10" fill="#e8c444"/><rect x="794.20" y="323.10" width="20.6" height="206.90" fill="#d95746"/><rect x="794.20" y="530.00" width="20.6" height="5.10" fill="#905db3"/><rect x="794.20" y="535.10" width="20.6" height="7.90" fill="#4f95d5"/><rect x="794.20" y="543.00" width="20.6" height="44.80" fill="#5ab99d"/><rect x="794.20" y="587.80" width="20.6" height="0.40" fill="#2b62c8"/><rect x="822.20" y="316.20" width="20.6" height="14.90" fill="#e8c444"/><rect x="822.20" y="331.10" width="20.6" height="201.70" fill="#d95746"/><rect x="822.20" y="532.80" width="20.6" height="5.70" fill="#905db3"/><rect x="822.20" y="538.50" width="20.6" height="4.50" fill="#4f95d5"/><rect x="822.20" y="543.00" width="20.6" height="42.60" fill="#5ab99d"/><rect x="822.20" y="585.60" width="20.6" height="2.60" fill="#2b62c8"/><rect x="850.20" y="297.90" width="20.6" height="16.50" fill="#e8c444"/><rect x="850.20" y="314.40" width="20.6" height="211.50" fill="#d95746"/><rect x="850.20" y="525.90" width="20.6" height="10.30" fill="#905db3"/><rect x="850.20" y="536.20" width="20.6" height="5.70" fill="#4f95d5"/><rect x="850.20" y="541.90" width="20.6" height="43.30" fill="#5ab99d"/><rect x="850.20" y="585.20" width="20.6" height="3.00" fill="#2b62c8"/><rect x="878.20" y="312.90" width="20.6" height="16.00" fill="#e8c444"/><rect x="878.20" y="328.90" width="20.6" height="204.80" fill="#d95746"/><rect x="878.20" y="533.70" width="20.6" height="5.20" fill="#905db3"/><rect x="878.20" y="538.90" width="20.6" height="8.50" fill="#4f95d5"/><rect x="878.20" y="547.40" width="20.6" height="40.40" fill="#5ab99d"/><rect x="878.20" y="587.80" width="20.6" height="0.40" fill="#2b62c8"/><rect x="906.20" y="297.10" width="20.6" height="16.00" fill="#e8c444"/><rect x="906.20" y="313.10" width="20.6" height="216.20" fill="#d95746"/><rect x="906.20" y="529.30" width="20.6" height="11.00" fill="#905db3"/><rect x="906.20" y="540.30" width="20.6" height="7.40" fill="#4f95d5"/><rect x="906.20" y="547.70" width="20.6" height="34.20" fill="#5ab99d"/><rect x="906.20" y="581.90" width="20.6" height="6.30" fill="#2b62c8"/><rect x="934.20" y="296.00" width="20.6" height="16.90" fill="#e8c444"/><rect x="934.20" y="312.90" width="20.6" height="218.40" fill="#d95746"/><rect x="934.20" y="531.30" width="20.6" height="13.90" fill="#905db3"/><rect x="934.20" y="545.20" width="20.6" height="4.90" fill="#4f95d5"/><rect x="934.20" y="550.10" width="20.6" height="32.80" fill="#5ab99d"/><rect x="934.20" y="582.90" width="20.6" height="5.30" fill="#2b62c8"/><rect x="962.20" y="289.50" width="20.6" height="15.10" fill="#e8c444"/><rect x="962.20" y="304.60" width="20.6" height="215.40" fill="#d95746"/><rect x="962.20" y="520.00" width="20.6" height="8.90" fill="#905db3"/><rect x="962.20" y="528.90" width="20.6" height="13.30" fill="#4f95d5"/><rect x="962.20" y="542.20" width="20.6" height="41.00" fill="#5ab99d"/><rect x="962.20" y="583.20" width="20.6" height="5.00" fill="#2b62c8"/><rect x="990.20" y="310.70" width="20.6" height="16.30" fill="#e8c444"/><rect x="990.20" y="327.00" width="20.6" height="203.60" fill="#d95746"/><rect x="990.20" y="530.60" width="20.6" height="12.40" fill="#905db3"/><rect x="990.20" y="543.00" width="20.6" height="3.30" fill="#4f95d5"/><rect x="990.20" y="546.30" width="20.6" height="32.70" fill="#5ab99d"/><rect x="990.20" y="579.00" width="20.6" height="9.20" fill="#2b62c8"/><rect x="1018.20" y="310.80" width="20.6" height="17.20" fill="#e8c444"/><rect x="1018.20" y="328.00" width="20.6" height="202.00" fill="#d95746"/><rect x="1018.20" y="530.00" width="20.6" height="21.90" fill="#905db3"/><rect x="1018.20" y="551.90" width="20.6" height="4.10" fill="#4f95d5"/><rect x="1018.20" y="556.00" width="20.6" height="28.30" fill="#5ab99d"/><rect x="1018.20" y="584.30" width="20.6" height="3.90" fill="#2b62c8"/><rect x="1046.20" y="302.80" width="20.6" height="15.30" fill="#e8c444"/><rect x="1046.20" y="318.10" width="20.6" height="210.40" fill="#d95746"/><rect x="1046.20" y="528.50" width="20.6" height="15.70" fill="#905db3"/><rect x="1046.20" y="544.20" width="20.6" height="6.20" fill="#4f95d5"/><rect x="1046.20" y="550.40" width="20.6" height="28.60" fill="#5ab99d"/><rect x="1046.20" y="579.00" width="20.6" height="9.20" fill="#2b62c8"/><rect x="1074.20" y="291.40" width="20.6" height="16.30" fill="#e8c444"/><rect x="1074.20" y="307.70" width="20.6" height="214.50" fill="#d95746"/><rect x="1074.20" y="522.20" width="20.6" height="11.00" fill="#905db3"/><rect x="1074.20" y="533.20" width="20.6" height="3.20" fill="#4f95d5"/><rect x="1074.20" y="536.40" width="20.6" height="46.10" fill="#5ab99d"/><rect x="1074.20" y="582.50" width="20.6" height="5.70" fill="#2b62c8"/><rect x="1102.20" y="465.50" width="20.6" height="7.70" fill="#e8c444"/><rect x="1102.20" y="473.20" width="20.6" height="72.50" fill="#d95746"/><rect x="1102.20" y="545.70" width="20.6" height="9.20" fill="#905db3"/><rect x="1102.20" y="554.90" width="20.6" height="2.10" fill="#4f95d5"/><rect x="1102.20" y="557.00" width="20.6" height="29.70" fill="#5ab99d"/><rect x="1102.20" y="586.70" width="20.6" height="1.50" fill="#2b62c8"/><line x1="290.5" y1="301" x2="1094.5" y2="301" stroke="rgba(0,0,0,.48)" stroke-width="1.3" stroke-dasharray="3.8 3.35"/><rect x="283" y="588" width="847" height="1" fill="#9a9a9a"/><rect x="300.0" y="589" width="1" height="5" fill="#9a9a9a"/><rect x="328.0" y="589" width="1" height="5" fill="#9a9a9a"/><rect x="356.0" y="589" width="1" height="5" fill="#9a9a9a"/><rect x="384.0" y="589" width="1" height="5" fill="#9a9a9a"/><rect x="412.0" y="589" width="1" height="5" fill="#9a9a9a"/><rect x="440.0" y="589" width="1" height="5" fill="#9a9a9a"/><rect x="468.0" y="589" width="1" height="5" fill="#9a9a9a"/><rect x="496.0" y="589" width="1" height="5" fill="#9a9a9a"/><rect x="524.0" y="589" width="1" height="5" fill="#9a9a9a"/><rect x="552.0" y="589" width="1" height="5" fill="#9a9a9a"/><rect x="580.0" y="589" width="1" height="5" fill="#9a9a9a"/><rect x="608.0" y="589" width="1" height="5" fill="#9a9a9a"/><rect x="636.0" y="589" width="1" height="5" fill="#9a9a9a"/><rect x="664.0" y="589" width="1" height="5" fill="#9a9a9a"/><rect x="692.0" y="589" width="1" height="5" fill="#9a9a9a"/><rect x="720.0" y="589" width="1" height="5" fill="#9a9a9a"/><rect x="748.0" y="589" width="1" height="5" fill="#9a9a9a"/><rect x="776.0" y="589" width="1" height="5" fill="#9a9a9a"/><rect x="804.0" y="589" width="1" height="5" fill="#9a9a9a"/><rect x="832.0" y="589" width="1" height="5" fill="#9a9a9a"/><rect x="860.0" y="589" width="1" height="5" fill="#9a9a9a"/><rect x="888.0" y="589" width="1" height="5" fill="#9a9a9a"/><rect x="916.0" y="589" width="1" height="5" fill="#9a9a9a"/><rect x="944.0" y="589" width="1" height="5" fill="#9a9a9a"/><rect x="972.0" y="589" width="1" height="5" fill="#9a9a9a"/><rect x="1000.0" y="589" width="1" height="5" fill="#9a9a9a"/><rect x="1028.0" y="589" width="1" height="5" fill="#9a9a9a"/><rect x="1056.0" y="589" width="1" height="5" fill="#9a9a9a"/><rect x="1084.0" y="589" width="1" height="5" fill="#9a9a9a"/><rect x="1112.0" y="589" width="1" height="5" fill="#9a9a9a"/></svg>
<div class="t" style="left:295.49px;top:289.88px;font-size:9px;line-height:9px;color:#333;">89</div>
<div class="t" style="left:295.27px;top:596.54px;font-size:9.4px;line-height:9.4px;color:#555;">24</div>
<div class="t" style="left:323.49px;top:276.98px;font-size:9px;line-height:9px;color:#333;">85</div>
<div class="t" style="left:323.27px;top:596.54px;font-size:9.4px;line-height:9.4px;color:#555;">25</div>
<div class="t" style="left:351.49px;top:301.68px;font-size:9px;line-height:9px;color:#333;">79</div>
<div class="t" style="left:351.27px;top:596.54px;font-size:9.4px;line-height:9.4px;color:#555;">26</div>
<div class="t" style="left:379.49px;top:285.38px;font-size:9px;line-height:9px;color:#333;">94</div>
<div class="t" style="left:379.27px;top:596.54px;font-size:9.4px;line-height:9.4px;color:#555;">27</div>
<div class="t" style="left:407.49px;top:315.48px;font-size:9px;line-height:9px;color:#333;">66</div>
<div class="t" style="left:407.27px;top:596.54px;font-size:9.4px;line-height:9.4px;color:#555;">28</div>
<div class="t" style="left:435.49px;top:305.58px;font-size:9px;line-height:9px;color:#333;">73</div>
<div class="t" style="left:435.27px;top:596.54px;font-size:9.4px;line-height:9.4px;color:#555;">29</div>
<div class="t" style="left:463.49px;top:288.68px;font-size:9px;line-height:9px;color:#333;">93</div>
<div class="t" style="left:463.27px;top:596.54px;font-size:9.4px;line-height:9.4px;color:#555;">30</div>
<div class="t" style="left:488.99px;top:284.98px;font-size:9px;line-height:9px;color:#333;">101</div>
<div class="t" style="left:491.27px;top:596.54px;font-size:9.4px;line-height:9.4px;color:#555;">31</div>
<div class="t" style="left:516.99px;top:269.88px;font-size:9px;line-height:9px;color:#333;">106</div>
<div class="t" style="left:521.89px;top:596.54px;font-size:9.4px;line-height:9.4px;color:#555;">1</div>
<div class="t" style="left:544.99px;top:267.18px;font-size:9px;line-height:9px;color:#333;">107</div>
<div class="t" style="left:549.89px;top:596.54px;font-size:9.4px;line-height:9.4px;color:#555;">2</div>
<div class="t" style="left:572.99px;top:288.08px;font-size:9px;line-height:9px;color:#333;">102</div>
<div class="t" style="left:577.89px;top:596.54px;font-size:9.4px;line-height:9.4px;color:#555;">3</div>
<div class="t" style="left:603.49px;top:302.08px;font-size:9px;line-height:9px;color:#333;">96</div>
<div class="t" style="left:605.89px;top:596.54px;font-size:9.4px;line-height:9.4px;color:#555;">4</div>
<div class="t" style="left:631.49px;top:298.78px;font-size:9px;line-height:9px;color:#333;">92</div>
<div class="t" style="left:633.89px;top:596.54px;font-size:9.4px;line-height:9.4px;color:#555;">5</div>
<div class="t" style="left:656.99px;top:290.18px;font-size:9px;line-height:9px;color:#333;">105</div>
<div class="t" style="left:661.89px;top:596.54px;font-size:9.4px;line-height:9.4px;color:#555;">6</div>
<div class="t" style="left:684.99px;top:287.08px;font-size:9px;line-height:9px;color:#333;">104</div>
<div class="t" style="left:689.89px;top:596.54px;font-size:9.4px;line-height:9.4px;color:#555;">7</div>
<div class="t" style="left:712.99px;top:278.18px;font-size:9px;line-height:9px;color:#333;">105</div>
<div class="t" style="left:717.89px;top:596.54px;font-size:9.4px;line-height:9.4px;color:#555;">8</div>
<div class="t" style="left:743.49px;top:277.68px;font-size:9px;line-height:9px;color:#333;">98</div>
<div class="t" style="left:745.89px;top:596.54px;font-size:9.4px;line-height:9.4px;color:#555;">9</div>
<div class="t" style="left:768.99px;top:284.08px;font-size:9px;line-height:9px;color:#333;">108</div>
<div class="t" style="left:771.27px;top:596.54px;font-size:9.4px;line-height:9.4px;color:#555;">10</div>
<div class="t" style="left:799.49px;top:296.98px;font-size:9px;line-height:9px;color:#333;">96</div>
<div class="t" style="left:799.62px;top:596.54px;font-size:9.4px;line-height:9.4px;color:#555;">11</div>
<div class="t" style="left:827.49px;top:305.18px;font-size:9px;line-height:9px;color:#333;">80</div>
<div class="t" style="left:827.27px;top:596.54px;font-size:9.4px;line-height:9.4px;color:#555;">12</div>
<div class="t" style="left:855.49px;top:286.88px;font-size:9px;line-height:9px;color:#333;">97</div>
<div class="t" style="left:855.27px;top:596.54px;font-size:9.4px;line-height:9.4px;color:#555;">13</div>
<div class="t" style="left:883.49px;top:301.88px;font-size:9px;line-height:9px;color:#333;">90</div>
<div class="t" style="left:883.27px;top:596.54px;font-size:9.4px;line-height:9.4px;color:#555;">14</div>
<div class="t" style="left:908.99px;top:286.08px;font-size:9px;line-height:9px;color:#333;">104</div>
<div class="t" style="left:911.27px;top:596.54px;font-size:9.4px;line-height:9.4px;color:#555;">15</div>
<div class="t" style="left:936.99px;top:284.98px;font-size:9px;line-height:9px;color:#333;">107</div>
<div class="t" style="left:939.27px;top:596.54px;font-size:9.4px;line-height:9.4px;color:#555;">16</div>
<div class="t" style="left:964.99px;top:278.48px;font-size:9px;line-height:9px;color:#333;">109</div>
<div class="t" style="left:967.27px;top:596.54px;font-size:9.4px;line-height:9.4px;color:#555;">17</div>
<div class="t" style="left:995.49px;top:299.68px;font-size:9px;line-height:9px;color:#333;">90</div>
<div class="t" style="left:995.27px;top:596.54px;font-size:9.4px;line-height:9.4px;color:#555;">18</div>
<div class="t" style="left:1023.49px;top:299.78px;font-size:9px;line-height:9px;color:#333;">87</div>
<div class="t" style="left:1023.27px;top:596.54px;font-size:9.4px;line-height:9.4px;color:#555;">19</div>
<div class="t" style="left:1051.49px;top:291.78px;font-size:9px;line-height:9px;color:#333;">96</div>
<div class="t" style="left:1051.27px;top:596.54px;font-size:9.4px;line-height:9.4px;color:#555;">20</div>
<div class="t" style="left:1077.33px;top:280.38px;font-size:9px;line-height:9px;color:#333;">115</div>
<div class="t" style="left:1079.27px;top:596.54px;font-size:9.4px;line-height:9.4px;color:#555;">21</div>
<div class="t" style="left:1107.49px;top:454.48px;font-size:9px;line-height:9px;color:#333;">62</div>
<div class="t" style="left:1107.27px;top:596.54px;font-size:9.4px;line-height:9.4px;color:#555;">22</div>
<div class="t" style="left:263.00px;top:618.27px;font-size:8.9px;line-height:8.9px;color:#444;font-weight:700;transform:scaleX(0.8898);transform-origin:0 0;">STOP GROUPS</div>
<div class="r" style="left:481.5px;top:618px;width:9.8px;height:9.8px;background:#7b1f1f;border-radius:2.5px;"></div>
<div class="t" style="left:497.70px;top:618.17px;font-size:9.6px;line-height:9.6px;color:#555;transform:scaleX(0.9370);transform-origin:0 0;">Meetings</div>
<div class="r" style="left:547px;top:618px;width:9.8px;height:9.8px;background:#4f95d5;border-radius:2.5px;"></div>
<div class="t" style="left:563.80px;top:618.17px;font-size:9.6px;line-height:9.6px;color:#555;transform:scaleX(0.9350);transform-origin:0 0;">Maintenance</div>
<div class="r" style="left:628.8px;top:618px;width:9.8px;height:9.8px;background:#e8c444;border-radius:2.5px;"></div>
<div class="t" style="left:645.00px;top:618.17px;font-size:9.6px;line-height:9.6px;color:#555;transform:scaleX(0.9369);transform-origin:0 0;">Organisational</div>
<div class="r" style="left:716.7px;top:618px;width:9.8px;height:9.8px;background:#d95746;border-radius:2.5px;"></div>
<div class="t" style="left:733.00px;top:618.17px;font-size:9.6px;line-height:9.6px;color:#555;transform:scaleX(0.9435);transform-origin:0 0;">Uncommented</div>
<div class="r" style="left:805.8px;top:618px;width:9.8px;height:9.8px;background:#905db3;border-radius:2.5px;"></div>
<div class="t" style="left:822.00px;top:618.17px;font-size:9.6px;line-height:9.6px;color:#555;transform:scaleX(0.9245);transform-origin:0 0;">Technical</div>
<div class="r" style="left:872px;top:618px;width:9.8px;height:9.8px;background:#5ab99d;border-radius:2.5px;"></div>
<div class="t" style="left:888.50px;top:618.17px;font-size:9.6px;line-height:9.6px;color:#555;transform:scaleX(0.9518);transform-origin:0 0;">Work arrangement</div>
<div class="r" style="left:977.4px;top:618px;width:9.8px;height:9.8px;background:#2b62c8;border-radius:2.5px;"></div>
<div class="t" style="left:993.70px;top:618.17px;font-size:9.6px;line-height:9.6px;color:#555;transform:scaleX(0.8889);transform-origin:0 0;">Setup</div>
<div class="t" style="left:1045.40px;top:618.17px;font-size:9.6px;line-height:9.6px;color:#555;transform:scaleX(0.9245);transform-origin:0 0;">1-30/30</div>
<svg class="s" style="left:1108px;top:617px;" width="8" height="11" viewBox="0 0 8 11"><path d="M6 1 L2 5.5 L6 10" fill="none" stroke="#aaa" stroke-width="1.2"/></svg>
<svg class="s" style="left:1143px;top:617px;" width="8" height="11" viewBox="0 0 8 11"><path d="M2 1 L6 5.5 L2 10" fill="none" stroke="#aaa" stroke-width="1.2"/></svg>
<div class="r" style="left:251.5px;top:653px;width:925.5px;height:90px;background:#fff;border-radius:4px;box-shadow:0 1.5px 3px rgba(0,0,0,.24),0 0 1px rgba(0,0,0,.1);"></div>
<div class="r" style="left:257px;top:713.4px;width:909px;height:20px;background:#f3f3f3;"></div>
<div class="r" style="left:257px;top:679.2px;width:909px;height:1px;background:#e4e4e4;"></div>
<div class="r" style="left:257px;top:713px;width:909px;height:1px;background:#ececec;"></div>
<div class="r" style="left:331px;top:658.5px;width:1px;height:80px;background:#e6e6e6;"></div>
<div class="r" style="left:1150.5px;top:658.7px;width:1px;height:20.5px;background:#e6e6e6;"></div>
<div class="t" style="left:263.20px;top:663.18px;font-size:9px;line-height:9px;color:#333;font-weight:700;transform:scaleX(1.0509);transform-origin:0 0;">Date</div>
<svg class="s" style="left:315.5px;top:664.5px;" width="9" height="9" viewBox="0 0 9 9"><path d="M4.5 8.5 V1.2 M1 4.5 L4.5 1 L8 4.5" fill="none" stroke="#5cc26f" stroke-width="1.3"/></svg>
<div class="t" style="left:337.50px;top:663.01px;font-size:9.2px;line-height:9.2px;color:#555;transform:scaleX(0.9869);transform-origin:0 0;-webkit-text-stroke:.25px #555;">Stop reasons</div>
<div class="t" style="left:480.50px;top:663.01px;font-size:9.2px;line-height:9.2px;color:#555;transform:scaleX(0.9877);transform-origin:0 0;-webkit-text-stroke:.25px #555;">Stop groups</div>
<div class="t" style="left:623.00px;top:663.01px;font-size:9.2px;line-height:9.2px;color:#555;transform:scaleX(1.0378);transform-origin:0 0;-webkit-text-stroke:.25px #555;">Stations</div>
<div class="t" style="left:821.20px;top:663.01px;font-size:9.2px;line-height:9.2px;color:#555;transform:scaleX(1.0007);transform-origin:0 0;-webkit-text-stroke:.25px #555;">Stop types</div>
<div class="t" style="left:933.20px;top:663.01px;font-size:9.2px;line-height:9.2px;color:#555;transform:scaleX(1.0030);transform-origin:0 0;-webkit-text-stroke:.25px #555;">Locations</div>
<div class="t" style="left:1076.00px;top:663.01px;font-size:9.2px;line-height:9.2px;color:#555;transform:scaleX(1.0191);transform-origin:0 0;-webkit-text-stroke:.25px #555;">Products</div>
<div class="t" style="left:766.00px;top:660.51px;font-size:9.2px;line-height:9.2px;color:#555;transform:scaleX(1.0474);transform-origin:0 0;-webkit-text-stroke:.25px #555;">Station</div>
<div class="t" style="left:766.00px;top:668.41px;font-size:9.2px;line-height:9.2px;color:#555;transform:scaleX(1.0309);transform-origin:0 0;-webkit-text-stroke:.25px #555;">groups</div>
<div class="r" style="left:1159.9px;top:663.1px;width:3px;height:3px;border-radius:50%;background:#555;"></div>
<div class="r" style="left:1159.9px;top:667.6px;width:3px;height:3px;border-radius:50%;background:#555;"></div>
<div class="r" style="left:1159.9px;top:672.0px;width:3px;height:3px;border-radius:50%;background:#555;"></div>
<div class="t" style="left:268.80px;top:692.16px;font-size:10.8px;line-height:10.8px;color:#333;font-weight:700;transform:scaleX(0.9324);transform-origin:0 0;">24.01.2023</div>
<div class="t" style="left:337.50px;top:692.16px;font-size:10.8px;line-height:10.8px;color:#4a4a4a;transform:scaleX(0.9428);transform-origin:0 0;">Product changeover, Set...</div>
<div class="t" style="left:480.50px;top:692.16px;font-size:10.8px;line-height:10.8px;color:#4a4a4a;transform:scaleX(0.9578);transform-origin:0 0;">Setup, Work arrangemen...</div>
<div class="t" style="left:623.00px;top:692.16px;font-size:10.8px;line-height:10.8px;color:#4a4a4a;transform:scaleX(0.9633);transform-origin:0 0;">Evocon production line 3,...</div>
<div class="t" style="left:766.00px;top:692.16px;font-size:10.8px;line-height:10.8px;color:#4a4a4a;transform:scaleX(0.9438);transform-origin:0 0;">Evocon</div>
<div class="t" style="left:821.20px;top:692.16px;font-size:10.8px;line-height:10.8px;color:#4a4a4a;transform:scaleX(0.9655);transform-origin:0 0;">Unplanned, Planned</div>
<div class="t" style="left:933.20px;top:692.16px;font-size:10.8px;line-height:10.8px;color:#4a4a4a;transform:scaleX(0.9883);transform-origin:0 0;">Unknown</div>
<div class="t" style="left:1076.00px;top:692.16px;font-size:10.8px;line-height:10.8px;color:#4a4a4a;transform:scaleX(0.9779);transform-origin:0 0;">Evocon instruction</div>
<div class="t" style="left:268.80px;top:726.16px;font-size:10.8px;line-height:10.8px;color:#333;font-weight:700;transform:scaleX(0.9324);transform-origin:0 0;">25.01.2023</div>
<div class="t" style="left:337.50px;top:726.16px;font-size:10.8px;line-height:10.8px;color:#4a4a4a;transform:scaleX(0.9268);transform-origin:0 0;">Setup, Product changeov...</div>
<div class="t" style="left:480.50px;top:726.16px;font-size:10.8px;line-height:10.8px;color:#4a4a4a;transform:scaleX(0.9578);transform-origin:0 0;">Setup, Work arrangemen...</div>
<div class="t" style="left:623.00px;top:726.16px;font-size:10.8px;line-height:10.8px;color:#4a4a4a;transform:scaleX(0.9633);transform-origin:0 0;">Evocon production line 2,...</div>
<div class="t" style="left:766.00px;top:726.16px;font-size:10.8px;line-height:10.8px;color:#4a4a4a;transform:scaleX(0.9438);transform-origin:0 0;">Evocon</div>
<div class="t" style="left:821.20px;top:726.16px;font-size:10.8px;line-height:10.8px;color:#4a4a4a;transform:scaleX(0.9655);transform-origin:0 0;">Unplanned, Planned</div>
<div class="t" style="left:933.20px;top:726.16px;font-size:10.8px;line-height:10.8px;color:#4a4a4a;transform:scaleX(0.9883);transform-origin:0 0;">Unknown</div>
<div class="t" style="left:1076.00px;top:726.16px;font-size:10.8px;line-height:10.8px;color:#4a4a4a;transform:scaleX(0.9418);transform-origin:0 0;">Evocon T-shirt, Evo</div>
<div class="r" style="left:1166.2px;top:679.8px;width:3.8px;height:60px;background:#777;"></div>
<svg class="s" style="left:1191.5px;top:729px;" width="12" height="12" viewBox="0 0 12 12"><path d="M1 1 L1 12 L3.8 9.4 L6 13.5 L8 12.6 L5.9 8.6 L9.6 8.4 Z" fill="#111" stroke="#fff" stroke-width="1"/></svg>
</body></html>
